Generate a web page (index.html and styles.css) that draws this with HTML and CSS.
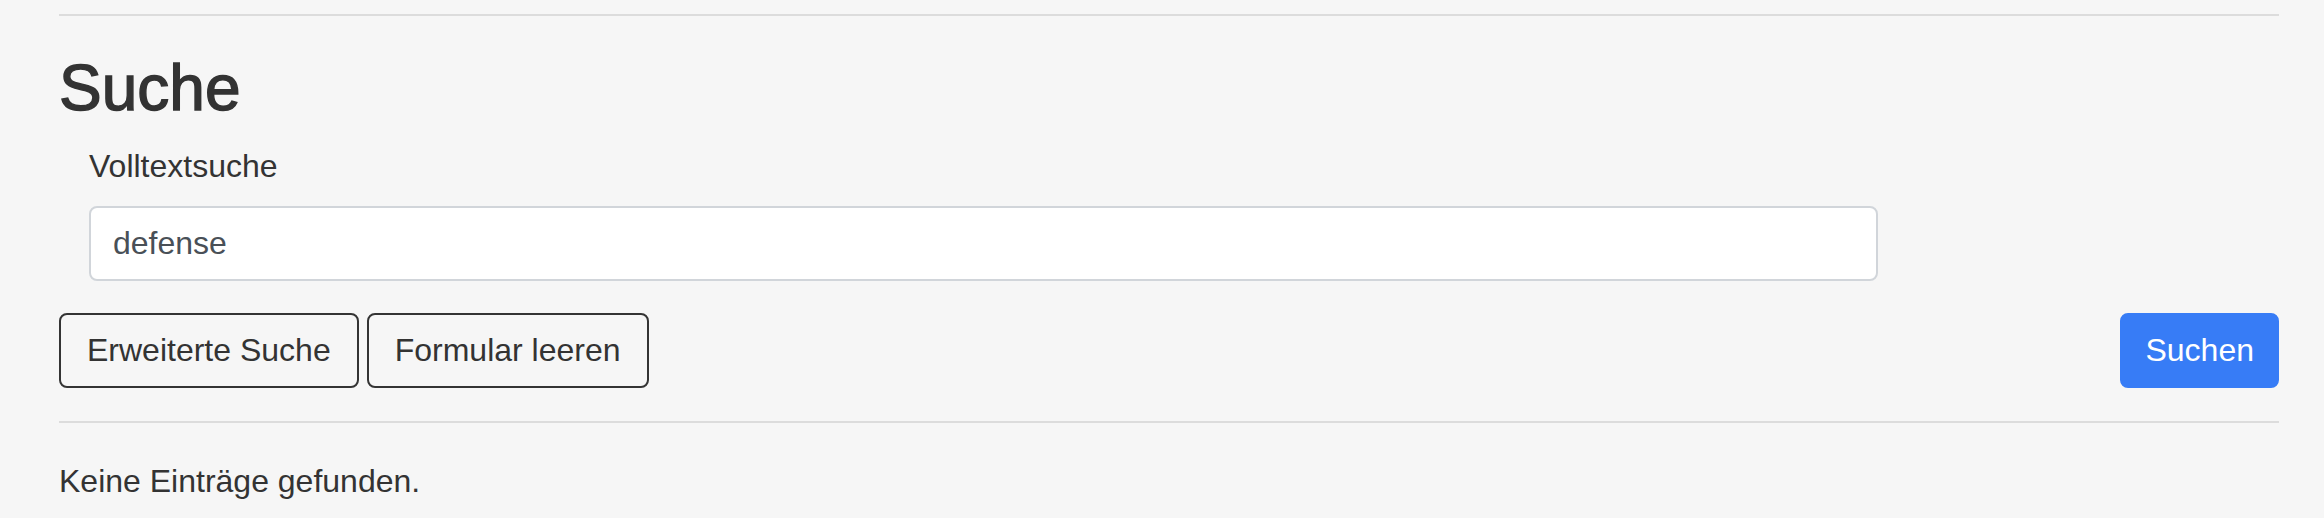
FILE: index.html
```html
<!DOCTYPE html>
<html lang="de">
<head>
<meta charset="utf-8">
<title>Suche</title>
<link rel="stylesheet" href="styles.css">
</head>
<body>
<div class="page">
  <div class="container">
    <hr class="rule rule-top">
    <h2 class="title">Suche</h2>
    <form class="search-form">
      <div class="form-group">
        <label class="label" for="q">Volltextsuche</label>
        <input class="input" id="q" type="text" value="defense">
      </div>
      <div class="actions">
        <div class="actions-left">
          <button type="button" class="btn btn-outline">Erweiterte Suche</button>
          <button type="button" class="btn btn-outline">Formular leeren</button>
        </div>
        <button type="button" class="btn btn-primary">Suchen</button>
      </div>
    </form>
    <hr class="rule rule-bottom">
    <p class="result">Keine Einträge gefunden.</p>
  </div>
</div>
</body>
</html>
```

FILE: styles.css
```css
* { box-sizing: border-box; }

html, body {
  margin: 0;
  padding: 0;
  background: #ffffff;
}

body {
  font-family: "Liberation Sans", Arial, Helvetica, sans-serif;
  color: #333333;
  font-size: 32px;
  line-height: 48px;
}

.page {
  background: #f6f6f6;
  padding-top: 14px;
  padding-bottom: 13px;
}

.container {
  margin-left: 59px;
  width: 2220px;
}

.rule {
  margin: 0;
  border: 0;
  border-top: 2px solid #dcdcdc;
  height: 0;
}

.rule-bottom {
  margin-top: 33px;
}

.title {
  margin: 34px 0 16px;
  font-size: 64px;
  line-height: 76px;
  font-weight: 500;
  color: #333333;
  -webkit-text-stroke: 1.4px #333333;
}

.search-form {
  margin: 0;
}

.form-group {
  margin-left: 30px;
  width: 1789px;
  display: flex;
  flex-direction: column;
  margin-bottom: 32px;
}

.label {
  display: block;
  margin-bottom: 16px;
  font-size: 32px;
  line-height: 48px;
  color: #333333;
}

.input {
  display: block;
  width: 100%;
  height: 75px;
  padding: 0 22px;
  font-family: inherit;
  font-size: 32px;
  color: #495057;
  background: #ffffff;
  border: 2px solid #d1d5da;
  border-radius: 8px;
  outline: none;
}

.actions {
  display: flex;
  justify-content: space-between;
  align-items: center;
}

.actions-left {
  display: flex;
  gap: 8px;
}

.btn {
  height: 75px;
  padding: 0 23px;
  font-family: inherit;
  font-size: 32px;
  line-height: 71px;
  border-radius: 8px;
  cursor: pointer;
  white-space: nowrap;
}

.btn-outline {
  padding: 0 26px;
  background: transparent;
  color: #333333;
  border: 2px solid #343434;
}

.btn-primary {
  background: #377cf6;
  color: #ffffff;
  border: 2px solid #377cf6;
}

.result {
  margin: 34px 0 0;
  font-size: 32px;
  line-height: 48px;
  color: #333333;
}
```
